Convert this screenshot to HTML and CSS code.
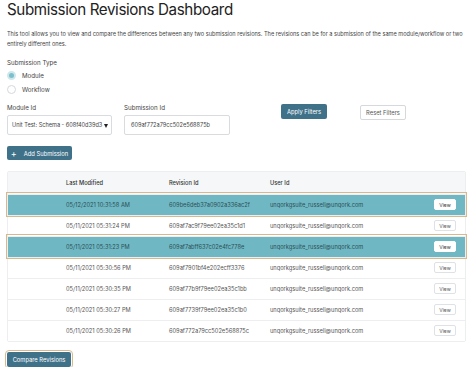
FILE: index.html
```html
<!DOCTYPE html>
<html>
<head>
    <meta charset="UTF-8">
    <title>Submission Revisions Dashboard</title>
    <link rel="stylesheet" href="styles.css">
</head>
<body>
    <div class="page">
        <h1 class="title">Submission Revisions Dashboard</h1>
        <p class="intro">This tool allows you to view and compare the differences between any two submission revisions. The revisions can be for a submission of the same module/workflow or two entirely different ones.</p>

        <div class="type">
            <div class="lbl">Submission Type</div>
            <label class="radio"><span class="dot on"></span>Module</label>
            <label class="radio"><span class="dot"></span>Workflow</label>
        </div>

        <div class="filters">
            <div class="field">
                <div class="lbl">Module Id</div>
                <div class="select">Unit Test: Schema - 608f40d39d3<span class="caret"></span></div>
            </div>
            <div class="field">
                <div class="lbl">Submission Id</div>
                <div class="input">609af772a79cc502e568875b</div>
            </div>
            <a href="javascript:;" class="btn dark apply">Apply Filters</a>
            <a href="javascript:;" class="btn light reset">Reset Filters</a>
        </div>

        <a href="javascript:;" class="btn dark add"><span class="plus">+</span>Add Submission</a>

        <div class="grid">
            <div class="row head">
                <span></span>
                <span>Last Modified</span>
                <span>Revision Id</span>
                <span>User Id</span>
                <span></span>
            </div>
            <div class="row sel">
                <span></span>
                <span>05/12/2021 10:31:58 AM</span>
                <span>609be6deb37a0902a336ac2f</span>
                <span>unqorkgsuite_russell@unqork.com</span>
                <span><a href="javascript:;" class="view">View</a></span>
            </div>
            <div class="row">
                <span></span>
                <span>05/11/2021 05:31:24 PM</span>
                <span>609af7ac9f79ee02ea35c1d1</span>
                <span>unqorkgsuite_russell@unqork.com</span>
                <span><a href="javascript:;" class="view">View</a></span>
            </div>
            <div class="row sel">
                <span></span>
                <span>05/11/2021 05:31:23 PM</span>
                <span>609af7abff637c02e4fc778e</span>
                <span>unqorkgsuite_russell@unqork.com</span>
                <span><a href="javascript:;" class="view">View</a></span>
            </div>
            <div class="row">
                <span></span>
                <span>05/11/2021 05:30:56 PM</span>
                <span>609af7901bf4e202ecff3376</span>
                <span>unqorkgsuite_russell@unqork.com</span>
                <span><a href="javascript:;" class="view">View</a></span>
            </div>
            <div class="row">
                <span></span>
                <span>05/11/2021 05:30:35 PM</span>
                <span>609af77b9f79ee02ea35c1bb</span>
                <span>unqorkgsuite_russell@unqork.com</span>
                <span><a href="javascript:;" class="view">View</a></span>
            </div>
            <div class="row">
                <span></span>
                <span>05/11/2021 05:30:27 PM</span>
                <span>609af7739f79ee02ea35c1b0</span>
                <span>unqorkgsuite_russell@unqork.com</span>
                <span><a href="javascript:;" class="view">View</a></span>
            </div>
            <div class="row">
                <span></span>
                <span>05/11/2021 05:30:26 PM</span>
                <span>609af772a79cc502e568875c</span>
                <span>unqorkgsuite_russell@unqork.com</span>
                <span><a href="javascript:;" class="view">View</a></span>
            </div>
        </div>

        <a href="javascript:;" class="btn dark compare">Compare Revisions</a>
    </div>
</body>
</html>
```

FILE: styles.css
```css
* {
    margin: 0;
    padding: 0;
    box-sizing: border-box;
}
body {
    background: #fff;
    font-family: Inter, "Liberation Sans", sans-serif;
    color: #333;
}
.page {
    padding: 0 8px 0 7px;
}
.title {
    font-size: 15.2px;
    font-weight: 400;
    letter-spacing: -0.4px;
    line-height: 20px;
    color: #222;
}
.intro {
    margin-top: 10px;
    font-size: 5.6px;
    line-height: 9.5px;
    color: #444;
}
.lbl {
    font-size: 6.2px;
    line-height: 9px;
    color: #444;
}
.type {
    margin-top: 9px;
}
.radio {
    display: flex;
    align-items: center;
    gap: 6px;
    height: 14px;
    font-size: 6.2px;
    color: #444;
}
.type .lbl {
    margin-bottom: 1px;
}
.dot {
    width: 9px;
    height: 9px;
    border-radius: 50%;
    border: 1px solid #d5d9dc;
    background: #fff;
}
.dot.on {
    border: 2px solid #cfe7eb;
    background: #7cc0cc;
}
.filters {
    display: flex;
    align-items: flex-start;
    margin-top: 7px;
}
.field {
    margin-right: 12px;
}
.field .lbl {
    margin-bottom: 3px;
}
.select,
.input {
    height: 20px;
    border: 1px solid #d8dcdf;
    border-radius: 2px;
    font-size: 5.6px;
    color: #444;
    display: flex;
    align-items: center;
    padding-left: 4px;
}
.select {
    width: 105px;
    position: relative;
}
.input {
    width: 106px;
    padding-left: 6px;
}
.caret {
    position: absolute;
    right: 3px;
    top: 8px;
    border-left: 2.5px solid transparent;
    border-right: 2.5px solid transparent;
    border-top: 4px solid #222;
}
.btn {
    display: inline-flex;
    align-items: center;
    justify-content: center;
    height: 15px;
    font-size: 5.8px;
    text-decoration: none;
    border-radius: 2px;
}
.btn.dark {
    background: #3f7189;
    color: #fff;
}
.btn.light {
    background: #fff;
    color: #555;
    border: 1px solid #d5d9dc;
}
.apply {
    width: 46px;
    margin: 1px 0 0 39px;
}
.reset {
    width: 46px;
    margin: 2px 0 0 33px;
}
.add {
    margin-top: 11px;
    width: 65px;
    height: 14px;
}
.plus {
    font-size: 9px;
    margin-right: 7px;
}
.grid {
    margin-top: 10px;
    border: 1px solid #eceeef;
    border-radius: 2px;
}
.row {
    display: grid;
    grid-template-columns: 58px 103px 101px 1fr 31px;
    align-items: center;
    height: 21px;
    font-size: 5.7px;
    color: #555;
    border-top: 1px solid #eceeef;
    background: #fff;
}
.row.head {
    height: 22px;
    border-top: 0;
    background: #f5f7f8;
    color: #333;
    font-weight: 500;
}
.row.sel {
    background: #6fb8c3;
    color: #2e4e55;
    outline: 1.5px solid #d8b98e;
    outline-offset: 1.5px;
    position: relative;
}
.view {
    display: inline-flex;
    align-items: center;
    justify-content: center;
    width: 22px;
    height: 11px;
    font-size: 5px;
    color: #555;
    background: #fff;
    border: 1px solid #dfe2e4;
    border-radius: 2px;
    text-decoration: none;
}
.sel .view {
    border-color: #fff;
    color: #333;
}
.compare {
    margin-top: 10px;
    width: 64px;
    height: 15px;
    outline: 1.5px solid #d8b98e;
    outline-offset: 1.5px;
}
```
